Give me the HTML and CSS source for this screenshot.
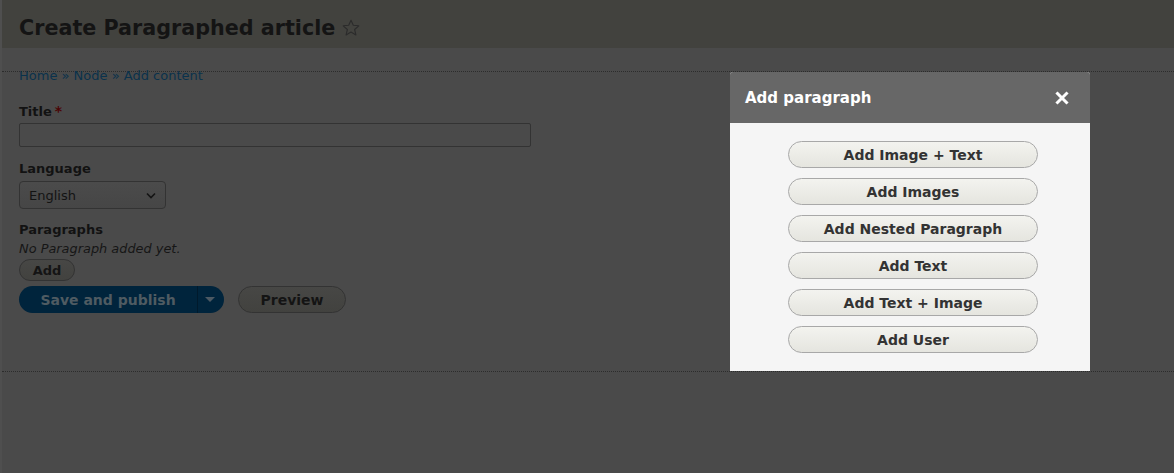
FILE: index.html
```html
<!DOCTYPE html>
<html>
<head>
<meta charset="utf-8">
<link rel="stylesheet" href="styles.css">
</head>
<body>
<div class="page">
  <header class="head">
    <h1 class="page-title">Create Paragraphed article</h1>
    <svg class="star" width="18" height="18" viewBox="0 0 18 18"><path d="M9 1.2l2.3 5.1 5.5.5-4.2 3.7 1.3 5.4L9 13.1l-4.9 2.8 1.3-5.4L1.2 6.8l5.5-.5z" fill="none" stroke="#2b2b2b" stroke-width="1.1" stroke-linejoin="round"/></svg>
  </header>
  <main class="region">
    <div class="breadcrumb"><a>Home</a> » <a>Node</a> » <a>Add content</a></div>
    <form class="form">
      <label class="label">Title<span class="req">*</span></label>
      <div class="input"></div>
      <label class="label lang">Language</label>
      <div class="select"><span>English</span>
        <svg width="10" height="7" viewBox="0 0 10 7"><path d="M1 1.5l4 4 4-4" fill="none" stroke="#141414" stroke-width="1.6"/></svg>
      </div>
      <label class="label paras">Paragraphs</label>
      <div class="empty">No Paragraph added yet.</div>
      <div class="btn small">Add</div>
      <div class="actions">
        <div class="primary"><span class="primary-label">Save and publish</span><span class="drop"><svg width="10" height="6" viewBox="0 0 10 6"><path d="M0 0h10L5 5z" fill="#4c5963"/></svg></span></div>
        <div class="btn preview">Preview</div>
      </div>
    </form>
  </main>
</div>
<div class="dialog">
  <div class="dialog-bar">
    <span class="dialog-title">Add paragraph</span>
    <svg class="close" width="14" height="14" viewBox="0 0 14 14"><path d="M2.5 2.5l9 9M11.5 2.5l-9 9" stroke="#fff" stroke-width="3" stroke-linecap="square"/></svg>
  </div>
  <div class="dialog-body">
    <div class="dbtn">Add Image + Text</div>
    <div class="dbtn">Add Images</div>
    <div class="dbtn">Add Nested Paragraph</div>
    <div class="dbtn">Add Text</div>
    <div class="dbtn">Add Text + Image</div>
    <div class="dbtn">Add User</div>
  </div>
</div>
</body>
</html>
```

FILE: styles.css
```css
html, body {
  margin: 0;
  padding: 0;
  height: 100%;
}
body {
  background: #4a4a4a;
  font-family: "DejaVu Sans", Verdana, sans-serif;
  font-size: 13px;
  color: #141414;
  position: relative;
  overflow: hidden;
}
.page {
  border-left: 2px solid #4f4f4f;
  min-height: 100%;
  box-sizing: border-box;
}
.head {
  height: 48px;
  background: #42423e;
  display: flex;
  align-items: center;
  padding-left: 17px;
}
.page-title {
  margin: 0;
  font-size: 20.7px;
  font-weight: bold;
  color: #141414;
  line-height: 1;
  margin-top: 8px;
}
.star {
  margin-left: 7px;
  margin-top: 8px;
}
.region {
  margin-top: 23px;
  border-top: 1px dotted #2c2c2c;
  border-bottom: 1px dotted #2c2c2c;
  padding: 0 17px;
  height: 301px;
  box-sizing: border-box;
}
.breadcrumb {
  margin-top: -4px;
  line-height: 16px;
  color: #0a324c;
}
.breadcrumb a {
  color: #0a324c;
}
.form {
  display: flex;
  flex-direction: column;
  align-items: flex-start;
}
.label {
  font-weight: bold;
  line-height: 16px;
  margin-top: 19px;
  color: #121212;
}
.req {
  color: #4a0505;
  margin-left: 3px;
  font-size: 14px;
}
.input {
  margin-top: 3px;
  width: 512px;
  height: 24px;
  box-sizing: border-box;
  border: 1px solid #333;
  border-radius: 2px;
  background: #4a4a4a;
}
.lang { margin-top: 14px; }
.select {
  margin-top: 4px;
  width: 147px;
  height: 28px;
  box-sizing: border-box;
  border: 1px solid #333;
  border-radius: 4px;
  background: linear-gradient(#4b4b4b, #464646);
  display: flex;
  align-items: center;
  justify-content: space-between;
  padding: 0 9px 0 9px;
  color: #131313;
}
.select svg { margin-top: 1px; }
.paras { margin-top: 13px; }
.empty {
  font-style: italic;
  font-size: 12.9px;
  line-height: 16px;
  margin-top: 3px;
  color: #161616;
}
.btn {
  box-sizing: border-box;
  border: 1px solid #333;
  background: linear-gradient(#474745, #42423f);
  font-weight: bold;
  color: #141414;
  display: flex;
  align-items: center;
  justify-content: center;
}
.small {
  margin-top: 2px;
  width: 56px;
  height: 22px;
  border-radius: 11px;
}
.actions {
  margin-top: 5px;
  display: flex;
  gap: 14px;
}
.primary {
  width: 205px;
  height: 27px;
  border-radius: 14px;
  background: #00243c;
  display: flex;
  align-items: center;
  font-weight: bold;
  font-size: 14px;
  color: #4f5b62;
  overflow: hidden;
}
.primary-label {
  width: 178px;
  text-align: center;
  border-right: 1px solid #001a2c;
  height: 100%;
  display: flex;
  align-items: center;
  justify-content: center;
}
.drop {
  flex: 1;
  display: flex;
  justify-content: center;
  align-items: center;
  padding-right: 3px;
}
.preview {
  width: 108px;
  height: 27px;
  border-radius: 14px;
  font-size: 14px;
}
.dialog {
  position: absolute;
  left: 730px;
  top: 72px;
  width: 360px;
  height: 299px;
  background: #f5f5f5;
  border-radius: 3px 3px 0 0;
  overflow: hidden;
}
.dialog-bar {
  height: 51px;
  background: #676767;
  display: flex;
  align-items: center;
  justify-content: space-between;
  padding: 0 21px 0 15px;
}
.dialog-title {
  color: #fff;
  font-weight: bold;
  font-size: 15px;
}
.dialog-body {
  padding: 18px 52px 0 58px;
  display: flex;
  flex-direction: column;
  gap: 10px;
}
.dbtn {
  height: 27px;
  box-sizing: border-box;
  border: 1px solid #a8a8a8;
  border-radius: 14px;
  background: linear-gradient(#f3f3ef, #e5e5df);
  font-weight: bold;
  font-size: 14px;
  color: #333;
  display: flex;
  align-items: center;
  justify-content: center;
}
```
